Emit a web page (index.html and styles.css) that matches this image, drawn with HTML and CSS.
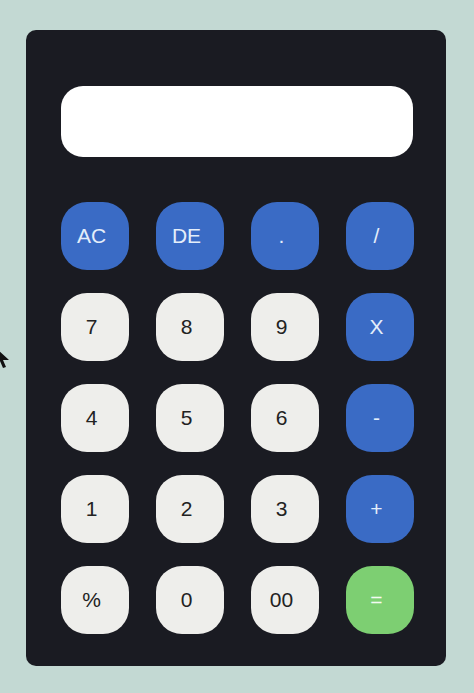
FILE: index.html
```html
<!DOCTYPE html>
<html>
<head>
<meta charset="utf-8">
<link rel="stylesheet" href="styles.css">
</head>
<body>
<svg class="cursor" width="10" height="20" viewBox="0 0 10 20"><path d="M-4 0 L9 12 L3 12 L6 19 L3 20 L0 13 L-4 17 Z" fill="#111"/></svg>
<div class="calc">
  <div class="display"></div>
  <div class="keys">
    <button class="key op">AC</button>
    <button class="key op">DE</button>
    <button class="key op">.</button>
    <button class="key op">/</button>
    <button class="key">7</button>
    <button class="key">8</button>
    <button class="key">9</button>
    <button class="key op">X</button>
    <button class="key">4</button>
    <button class="key">5</button>
    <button class="key">6</button>
    <button class="key op">-</button>
    <button class="key">1</button>
    <button class="key">2</button>
    <button class="key">3</button>
    <button class="key op">+</button>
    <button class="key">%</button>
    <button class="key">0</button>
    <button class="key">00</button>
    <button class="key eq">=</button>
  </div>
</div>
</body>
</html>
```
FILE: styles.css
```css
html, body {
  margin: 0;
  padding: 0;
}
body {
  background: #c3d9d3;
  width: 474px;
  height: 693px;
  position: relative;
  overflow: hidden;
  font-family: "Liberation Sans", Arial, sans-serif;
}
.cursor {
  position: absolute;
  left: 0;
  top: 348px;
}
.calc {
  margin: 30px 0 0 26px;
  width: 420px;
  box-sizing: border-box;
  padding: 56px 32px 32px 35px;
  background: #1a1b22;
  border-radius: 10px;
}
.display {
  height: 71px;
  width: 352px;
  background: #ffffff;
  border-radius: 22px;
  margin-bottom: 45px;
}
.keys {
  display: grid;
  grid-template-columns: repeat(4, 68px);
  grid-auto-rows: 68px;
  column-gap: 27px;
  row-gap: 23px;
}
.key {
  border: none;
  margin: 0;
  padding: 0 7px 0 0;
  border-radius: 26px;
  background: #eeeeeb;
  color: #222222;
  font-family: "Liberation Sans", Arial, sans-serif;
  font-size: 21px;
  display: flex;
  align-items: center;
  justify-content: center;
}
.key.op {
  background: #3a6bc5;
  color: #e4eefa;
}
.key.eq {
  background: #7dcf72;
  color: #f4fbf2;
}
```
